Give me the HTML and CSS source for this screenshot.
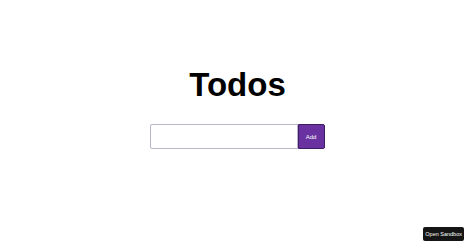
FILE: index.html
```html
<!DOCTYPE html>
<html lang="en">
<head>
    <meta charset="UTF-8">
    <meta name="viewport" content="width=device-width, initial-scale=1.0">
    <title>Todos</title>
    <link rel="stylesheet" href="styles.css">
</head>
<body>

    <div class='app'>
        <h1 class='title'>Todos</h1>
        <form class='todo-form'>
            <input class='todo-input' type='text'>
            <button class='add-btn' type='button'>Add</button>
        </form>
    </div>

    <a class='sandbox-btn' href='#'>Open Sandbox</a>

</body>
</html>
```

FILE: styles.css
```css
/* 기본 margin 제거 */
*{
    margin : 0;
    box-sizing: border-box;
}

body{
    font-family: "Liberation Sans", Arial, sans-serif;
    background-color: #fff;
}

.app{
    display: flex;
    flex-direction: column;
    align-items: center;
    padding-top: 65px;
}

.title{
    font-size: 33px;
    font-weight: bold;
    color: #000;
    line-height: 40px;
    margin-left: 1px;
}

.todo-form{
    display: flex;
    margin-top: 19px;
}

.todo-input{
    width : 148px ; height: 25px;
    border : 1px solid #b9b4cc;
    border-radius: 2px 0 0 2px;
    outline: none;
}

.add-btn{
    width : 27px ; height: 25px;
    background-color: #6a32a1;
    color: #fff;
    border : 1px solid #3f1d63;
    border-radius: 0 2px 2px 0;
    font-size: 6px;
    font-family: "Liberation Sans", Arial, sans-serif;
    padding: 0;
}

/* 오른쪽 아래 고정 버튼 */
.sandbox-btn{
    position: fixed;
    right: 10px;
    bottom: 7px;
    background-color: #151515;
    color: #fff;
    font-size: 5.5px;
    line-height: 8px;
    padding: 3px 2px;
    border-radius: 2px;
    text-decoration: none;
}
```
